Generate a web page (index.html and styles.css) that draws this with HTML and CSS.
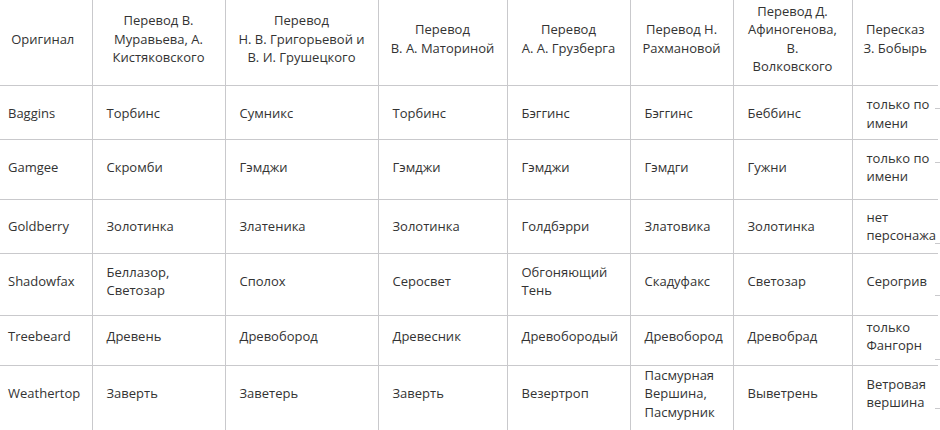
FILE: index.html
```html
<!DOCTYPE html>
<html lang="ru">
<head>
<meta charset="utf-8">
<title>Переводы имён</title>
<link rel="stylesheet" href="styles.css">
</head>
<body>
<div class="page">
  <div class="wrap">
    <table class="names">
      <colgroup>
        <col class="c1"><col class="c2"><col class="c3"><col class="c4"><col class="c5"><col class="c6"><col class="c7"><col class="c8">
      </colgroup>
      <thead>
        <tr class="r-head">
          <th>Оригинал</th>
          <th>Перевод В.<br>Муравьева, А.<br>Кистяковского</th>
          <th>Перевод<br>Н. В. Григорьевой и<br>В. И. Грушецкого</th>
          <th>Перевод<br>В. А. Маториной</th>
          <th>Перевод<br>А. А. Грузберга</th>
          <th>Перевод Н.<br>Рахмановой</th>
          <th>Перевод Д.<br>Афиногенова,<br>В.<br>Волковского</th>
          <th>Пересказ<br>З. Бобырь</th>
        </tr>
      </thead>
      <tbody>
        <tr class="r1">
          <td>Baggins</td><td>Торбинс</td><td>Сумникс</td><td>Торбинс</td><td>Бэггинс</td><td>Бэггинс</td><td>Беббинс</td><td>только по<br>имени</td>
        </tr>
        <tr class="r2">
          <td>Gamgee</td><td>Скромби</td><td>Гэмджи</td><td>Гэмджи</td><td>Гэмджи</td><td>Гэмдги</td><td>Гужни</td><td>только по<br>имени</td>
        </tr>
        <tr class="r3">
          <td>Goldberry</td><td>Золотинка</td><td>Златеника</td><td>Золотинка</td><td>Голдбэрри</td><td>Златовика</td><td>Золотинка</td><td>нет<br>персонажа</td>
        </tr>
        <tr class="r4">
          <td>Shadowfax</td><td>Беллазор,<br>Светозар</td><td>Сполох</td><td>Серосвет</td><td>Обгоняющий<br>Тень</td><td>Скадуфакс</td><td>Светозар</td><td>Серогрив</td>
        </tr>
        <tr class="r5">
          <td>Treebeard</td><td>Древень</td><td>Древобород</td><td>Древесник</td><td>Древобородый</td><td>Древобород</td><td>Древобрад</td><td>только<br>Фангорн</td>
        </tr>
        <tr class="r6">
          <td>Weathertop</td><td>Заверть</td><td>Заветерь</td><td>Заверть</td><td>Везертроп</td><td>Пасмурная<br>Вершина,<br>Пасмурник</td><td>Выветрень</td><td>Ветровая<br>вершина</td>
        </tr>
      </tbody>
    </table>
  </div>
  <div class="ticks" aria-hidden="true">
    <span class="tick" style="top:108px"></span>
    <span class="tick" style="top:162px"></span>
    <span class="tick" style="top:243px"></span>
    <span class="tick" style="top:295px"></span>
    <span class="tick" style="top:359px"></span>
    <span class="tick" style="top:408px"></span>
  </div>
</div>
</body>
</html>
```

FILE: styles.css
```css
html, body {
  margin: 0;
  padding: 0;
  background: #ffffff;
}

body {
  font-family: "Open Sans", "Noto Sans", sans-serif;
  font-size: 13px;
  line-height: 18.5px;
  color: #333333;
  overflow: hidden;
  width: 940px;
  height: 430px;
}

.page {
  position: relative;
  width: 940px;
  height: 430px;
  overflow: hidden;
}

.wrap {
  margin: -3px 0 0 -6px;
}

.names {
  border-collapse: collapse;
  table-layout: fixed;
  width: 944px;
}

.c1 { width: 98px; }
.c2 { width: 133px; }
.c3 { width: 153px; }
.c4 { width: 129px; }
.c5 { width: 123px; }
.c6 { width: 103px; }
.c7 { width: 119px; }
.c8 { width: 86px; }

.names th,
.names td {
  border: 1px solid #c9c9cc;
  vertical-align: middle;
  padding: 0 4px 0 14px;
  font-weight: 400;
}

.names th {
  text-align: center;
  padding: 0 4px 4px;
}

.names tr > :first-child {
  border-left: none;
}

.names tr > :last-child {
  border-right: none;
}

.names thead th {
  border-top: none;
}

.r-head { height: 88px; }
.r1 { height: 54px; }
.r2 { height: 60px; }
.r3 { height: 54px; }
.r4 { height: 62px; }
.r5 { height: 50px; }
.r6 { height: 66px; }

.r1 td { padding-top: 3px; }
.r2 td { padding-bottom: 4px; }
.r4 td { padding-bottom: 6px; }
.r5 td { padding-bottom: 8px; }
.r6 td { padding-bottom: 10px; }

.ticks {
  position: absolute;
  top: 0;
  right: 0;
  width: 6px;
  height: 430px;
}

.tick {
  position: absolute;
  right: 0;
  width: 5px;
  height: 1px;
  background: #c9c9cc;
}
```
